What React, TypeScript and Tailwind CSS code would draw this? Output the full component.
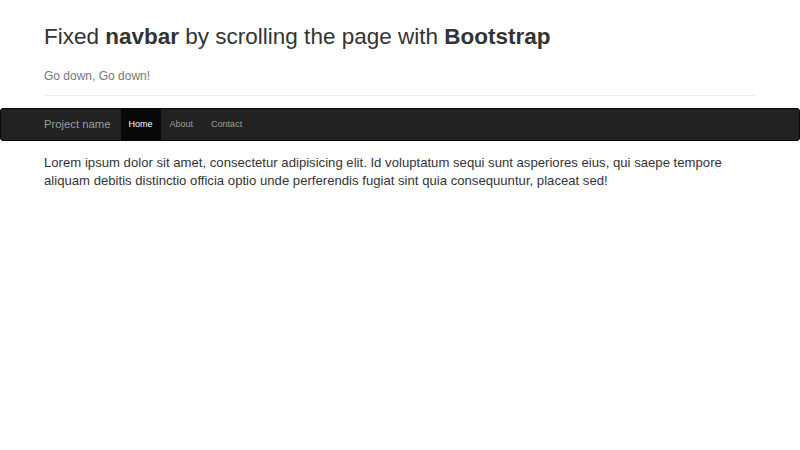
export default function App() {
  return (
    <div className="min-h-[450px] bg-white text-[#333]" style={{ fontFamily: '"Liberation Sans", Arial, sans-serif' }}>
      <div className="mx-[44px]">
        <div className="pt-[22px] pb-[10px] border-b border-[#eee]">
          <h1 className="text-[22.5px] leading-[30px] font-normal text-[#333]">
            Fixed <b>navbar</b> by scrolling the page with <b>Bootstrap</b>
          </h1>
          <p className="mt-[15px] text-[12px] leading-[18px] text-[#777]">Go down, Go down!</p>
        </div>
      </div>
      <nav className="mt-[12px] h-[33px] bg-[#222] border border-[#080808] rounded-[3px] flex items-stretch pl-[43px]">
        <span className="flex items-center text-[11.3px] text-[#9d9d9d] pr-[10px]">Project name</span>
        <span className="flex items-center bg-[#080808] text-white text-[9px] px-[8px]">Home</span>
        <span className="flex items-center text-[#9d9d9d] text-[9px] px-[9px]">About</span>
        <span className="flex items-center text-[#9d9d9d] text-[9px] px-[9px]">Contact</span>
      </nav>
      <div className="mx-[44px] mt-[13px]">
        <p className="text-[13.15px] leading-[18px] text-[#333]">
          Lorem ipsum dolor sit amet, consectetur adipisicing elit. Id voluptatum sequi sunt asperiores eius, qui saepe tempore aliquam debitis distinctio officia optio unde perferendis fugiat sint quia consequuntur, placeat sed!
        </p>
      </div>
    </div>
  );
}
